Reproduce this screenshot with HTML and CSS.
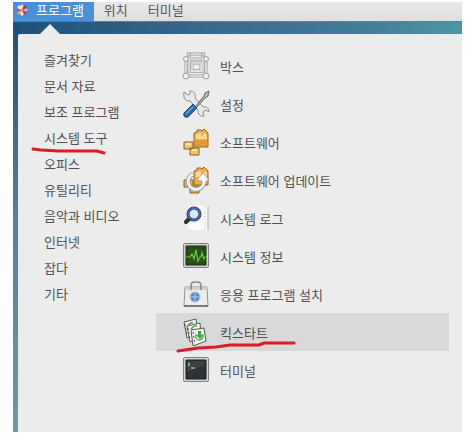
FILE: index.html
```html
<!DOCTYPE html>
<html lang="ko">
<head>
<meta charset="UTF-8">
<meta name="viewport" content="width=device-width, initial-scale=1.0">
<title>프로그램</title>
<link rel="stylesheet" href="styles.css">
</head>
<body>
<div class="desktop">
  <header class="topbar">
    <button class="topbar-item active">
      <svg class="logo" viewBox="0 0 14 14">
        <path d="M7 0l3 3-3 4-3-4z" fill="#efe08a"/>
        <path d="M14 7l-3 3-4-3 4-3z" fill="#eeb45a"/>
        <path d="M7 14l-3-3 3-4 3 4z" fill="#f6eab8"/>
        <path d="M0 7l3-3 4 3-4 3z" fill="#c04a98"/>
        <path d="M2 2h3l2 5-5-2z" fill="#f4e9d0"/>
        <path d="M12 2v3L7 7l2-5z" fill="#a8306e"/>
        <path d="M12 12H9L7 7l5 2z" fill="#83469f"/>
        <path d="M2 12V9l5-2-2 5z" fill="#e5b04f"/>
      </svg>
      프로그램
    </button>
    <button class="topbar-item">위치</button>
    <button class="topbar-item">터미널</button>
  </header>

  <main class="menu">
    <nav class="categories">
      <a href="#">즐겨찾기</a>
      <a href="#">문서 자료</a>
      <a href="#">보조 프로그램</a>
      <a href="#" class="marked">시스템 도구
        <svg class="mark mark-category" viewBox="0 0 76 8"><path d="M2 2L10 3 28 4 66 4 73 6"/></svg>
      </a>
      <a href="#">오피스</a>
      <a href="#">유틸리티</a>
      <a href="#">음악과 비디오</a>
      <a href="#">인터넷</a>
      <a href="#">잡다</a>
      <a href="#">기타</a>
    </nav>

    <div class="apps">
      <a href="#" class="app">
        <svg viewBox="0 0 28 28">
          <g fill="none" stroke="#9a9b98" stroke-width="3">
            <path d="M7 2h14v17H7z"/><path d="M4 7h20v17H4z"/><path d="M10 11h9v8h-9z"/>
          </g>
          <g fill="none" stroke="#e6e7e4" stroke-width="1.600">
            <path d="M7 2h14v17H7z"/><path d="M4 7h20v17H4z"/><path d="M10 11h9v8h-9z"/>
          </g>
          <g fill="#eeefec" stroke="#8b8d89" stroke-width=".8">
            <circle cx="4" cy="7" r="2.500"/><circle cx="24" cy="7" r="2.500"/><circle cx="4" cy="24" r="3"/><circle cx="24" cy="24" r="3"/>
            <circle cx="7" cy="2.500" r="1.600"/><circle cx="21" cy="2.500" r="1.600"/>
          </g>
        </svg>
        박스
      </a>
      <a href="#" class="app">
        <svg viewBox="0 0 28 28">
          <path d="M2 2l4 3 2-1 0-3c4 0 6 3 5 7l8 9c4-1 6 2 6 5l-4-2-2 2 1 4c-4 1-6-2-6-6L8 11c-5 1-7-4-6-9z" fill="#e8e9e6" stroke="#8b8d89"/>
          <path d="M13 17L22 6l1-3 4-2-1 5-3 2-9 10z" fill="#b9bbb7" stroke="#555753" stroke-width=".9"/>
          <path d="M11 14l4 4-9 9c-3 1-5-1-4-4z" fill="#3465a4" stroke="#204a87"/>
          <path d="M11 17l-7 7" stroke="#7da5d6" stroke-width="1.300"/>
        </svg>
        설정
      </a>
      <a href="#" class="app">
        <svg viewBox="0 0 28 28">
          <path d="M12 5l3-1V2h4l1 1 2-2 4 4v14H12z" fill="#eeb04d" stroke="#9c641c"/>
          <path d="M14 7l3-2h2v4l4-4 2 2v4H14z" fill="#f9d996"/><path d="M13 12h12v6H13z" fill="#e09a38"/>
          <path d="M2 14h9v7H2zM8 20h9v7H8z" fill="#f3c469" stroke="#8d5c20"/>
          <path d="M4 16h5M10 22h5" stroke="#fff0c6" stroke-width="1.500"/>
        </svg>
        소프트웨어
      </a>
      <a href="#" class="app">
        <svg viewBox="0 0 28 28">
          <path d="M12 5l3-1V2h4l1 1 2-2 4 4v14H12z" fill="#eeb04d" stroke="#9c641c"/>
          <path d="M14 7l3-2h2v4l4-4 2 2v4H14z" fill="#f9d996"/>
          <path d="M2 14h9v7H2zM8 20h9v7H8z" fill="#e8b352" stroke="#8d5c20"/>
          <path d="M11 8a8 8 0 1 0 11 6" fill="none" stroke="#8d8e97" stroke-width="4.500"/>
          <path d="M11 8a8 8 0 1 0 11 6" fill="none" stroke="#f0f0f4" stroke-width="3"/>
          <path d="M15 14l6-7 6 7-3 1-5 0z" fill="#fafafc" stroke="#8d8e97" stroke-width=".7"/>
          <path d="M20 12h4v4h-4z" fill="#fafafc"/>
        </svg>
        소프트웨어 업데이트
      </a>
      <a href="#" class="app">
        <svg viewBox="0 0 28 28">
          <path d="M5 2h21v24H5z" fill="#fafafa"/><path d="M26 2v24" stroke="#b0b1af"/>
          <path d="M6 3v23M23 3v23" stroke="#c7c8c5" stroke-dasharray="1 2"/>
          <path d="M7 15l-3 3" stroke="#2d302f" stroke-width="4" stroke-linecap="round"/>
          <circle cx="12" cy="10" r="6" fill="#dce6f2" stroke="#273f88" stroke-width="3"/>
          <circle cx="12" cy="10" r="6" fill="none" stroke="#6f8fc8" stroke-width=".8"/>
        </svg>
        시스템 로그
      </a>
      <a href="#" class="app">
        <svg viewBox="0 0 28 28">
          <rect x="1.500" y="1.500" width="25" height="24" rx="1.500" fill="#d2d4cf" stroke="#80827e"/>
          <path d="M4 4h20v19H4z" fill="#254a17" stroke="#173010"/>
          <path d="M4 9h20M4 14h20M4 19h20M9 4v19M14 4v19M19 4v19" stroke="#356526" stroke-width=".6"/>
          <path d="M4 15h4l2-3 2 5 2-9 2 11 2-4h1l1-4 2 6 1-2h2" fill="none" stroke="#67cf34" stroke-width="1.200"/>
        </svg>
        시스템 정보
      </a>
      <a href="#" class="app">
        <svg viewBox="0 0 28 28">
          <path d="M3 7h22l1 19H2z" fill="#ecebe8" stroke="#94938f"/>
          <path d="M3 7h22l-2 3H5z" fill="#cfcec8"/>
          <path d="M9 10V6q0-4 3-4h4q3 0 3 4v4" fill="none" stroke="#8c8b87" stroke-width="1.600"/>
          <path d="M2 26h24" stroke="#686763" stroke-width="1.500"/>
          <circle cx="13" cy="17" r="5" fill="#5685c3" stroke="#b3c9e5"/>
          <path d="M13 13v8M9 17h8" stroke="#b3d0f3"/>
        </svg>
        응용 프로그램 설치
      </a>
      <a href="#" class="app selected marked">
        <svg viewBox="0 0 28 28">
          <g fill="#f4f5f3" stroke="#565855">
            <path d="M2 4l12-3 2 14-11 5z"/>
            <path d="M5 8l13-3 1 14-11 5z"/>
            <path d="M9 12l13-2 2 13-13 5z"/>
          </g>
          <path d="M6 8q2-4 5-3M9 11q3-4 6-3" fill="none" stroke="#4ba447" stroke-width="1.500"/>
          <path d="M3 6l2 11M6 10l2 11M11 14l2 12" stroke="#555" stroke-dasharray="2 2"/>
          <path d="M14 16c-2 8 8 8 7 0" fill="none" stroke="#4cae49" stroke-width="1.300"/>
          <path d="M16 13h3v4h2l-3 4-4-4h2z" fill="#3fa63d"/>
        </svg>
        킥스타트
        <svg class="mark mark-app" viewBox="0 0 120 12"><path d="M2 10L22 7 40 6 54 4 83 4 88 2 118 2"/></svg>
      </a>
      <a href="#" class="app">
        <svg viewBox="0 0 28 28">
          <rect x="1.500" y="1.500" width="25" height="24" rx="1.500" fill="#d2d4cf" stroke="#80827e"/>
          <path d="M4 4h20v19H4z" fill="#2e3436" stroke="#171b1c"/>
          <path d="M5 5h18v4L5 16z" fill="#3b4243"/>
          <path d="M6 7l2 1.500L6 10M9 12h4" fill="none" stroke="#d9dfdb"/>
        </svg>
        터미널
      </a>
    </div>
  </main>
</div>
</body>
</html>
```
FILE: styles.css
```css
* {
  box-sizing: border-box;
}

body {
  margin: 0;
  padding: 2px 12px 2px 13px;
  min-height: 100vh;
  display: flex;
  background-color: #fff;
  color: #505050;
  font-family: "Noto Sans CJK KR", sans-serif;
  font-size: 13px;
}

a {
  color: inherit;
  text-decoration: none;
}

.desktop {
  flex: 1;
  display: flex;
  flex-direction: column;
  background: linear-gradient(to right, #1f5077, #3b6c91 50%, #427f9f 80%, #4a97a3) top / 100% 32px no-repeat,
    linear-gradient(#1d4b70, #567f9e 50%, #6d99aa);
}

.topbar {
  display: flex;
  height: 20px;
  background: linear-gradient(#e9e9e9, #dedede);
  border-bottom: 1px solid #667c8b;
}

.topbar-item {
  display: flex;
  align-items: center;
  gap: 8px;
  margin: 0;
  padding: 0 10px 3px;
  border: none;
  background: none;
  color: #555;
  font: inherit;
  line-height: 16px;
}

.topbar-item.active {
  padding-left: 3px;
  background-color: #4a90d9;
  color: #fff;
}

.logo {
  width: 12px;
  height: 12px;
}

.menu {
  position: relative;
  flex: 1;
  display: flex;
  margin: 12px 0 0 5px;
  padding: 13px 13px 13px 0;
  background-color: #ececec;
  border-radius: 2px 0 0 0;
}

/* arrow pointing at the open top bar item */
.menu::before {
  content: "";
  position: absolute;
  left: 22px;
  top: -10px;
  border: 10px solid transparent;
  border-top: none;
  border-bottom-color: #ececec;
}

.categories {
  display: flex;
  flex-direction: column;
  width: 138px;
  padding-left: 26px;
}

.categories a {
  line-height: 26px;
}

.apps {
  flex: 1;
}

.app {
  display: flex;
  align-items: center;
  gap: 10px;
  height: 38px;
  padding-left: 26px;
}

.app svg {
  width: 28px;
  height: 28px;
}

.selected {
  background-color: #d9d9d9;
}

.marked {
  position: relative;
}

/* red pen underlines */
.marked .mark {
  position: absolute;
  fill: none;
  stroke: #e01b24;
  stroke-width: 3;
  stroke-linecap: round;
  stroke-linejoin: round;
}

.marked .mark-category {
  left: -13px;
  top: 22px;
  width: 76px;
  height: 8px;
}

.marked .mark-app {
  left: 20px;
  top: 28px;
  width: 120px;
  height: 12px;
}
```
